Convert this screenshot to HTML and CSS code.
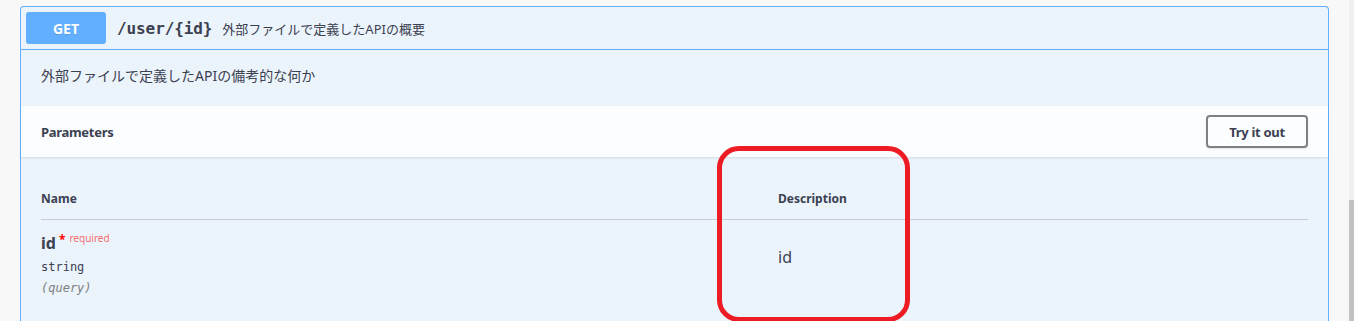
FILE: index.html
```html
<!DOCTYPE html>
<html lang="ja">
<head>
<meta charset="utf-8">
<title>GET /user/{id}</title>
<link rel="stylesheet" href="styles.css">
</head>
<body>
<div class="page">
  <div class="main">
    <div class="opblock">
      <div class="summary">
        <span class="method">GET</span>
        <span class="path">/user/{id}</span>
        <span class="summary-text">外部ファイルで定義したAPIの概要</span>
      </div>
      <div class="description">外部ファイルで定義したAPIの備考的な何か</div>
      <div class="section-header">
        <h4 class="section-title">Parameters</h4>
        <button class="try-btn">Try it out</button>
      </div>
      <div class="table-container">
        <div class="params">
          <div class="th">Name</div>
          <div class="th">Description</div>
          <div class="cell-name">
            <div class="param-name">id<span class="star">*</span><span class="req">required</span></div>
            <div class="param-type">string</div>
            <div class="param-in">(query)</div>
          </div>
          <div class="cell-desc">id</div>
        </div>
      </div>
    </div>
    <div class="highlight"></div>
  </div>
  <div class="scrollbar"><div class="thumb"></div></div>
</div>
</body>
</html>
```

FILE: styles.css
```css
html, body {
  margin: 0;
  padding: 0;
  height: 100%;
  overflow: hidden;
}
body {
  background: #f8f8f8;
  font-family: "Noto Sans", "Noto Sans CJK JP", sans-serif;
  color: #3b4151;
}
.page {
  display: flex;
  height: 321px;
  overflow: hidden;
}
.main {
  flex: 1;
  position: relative;
  padding: 6px 20px 0 20px;
}
.opblock {
  background: #ebf3fb;
  border: 1px solid #61affe;
  border-bottom: none;
  border-radius: 4px 4px 0 0;
  height: 400px;
}
.summary {
  display: flex;
  align-items: center;
  padding: 5px;
  border-bottom: 1px solid #61affe;
  height: 32px;
}
.method {
  width: 80px;
  height: 32px;
  background: #61affe;
  color: #fff;
  border-radius: 3px;
  font-weight: 700;
  font-size: 14px;
  display: flex;
  align-items: center;
  justify-content: center;
  text-shadow: 0 1px 0 rgba(0,0,0,.1);
}
.path {
  font-family: "DejaVu Sans Mono", monospace;
  font-size: 16px;
  font-weight: 600;
  margin-left: 11px;
  letter-spacing: -0.1px;
}
.summary-text {
  font-size: 13px;
  margin-left: 10px;
}
.description {
  height: 56px;
  box-sizing: border-box;
  padding: 16px 20px 0;
  font-size: 14px;
  line-height: 20px;
}
.section-header {
  display: flex;
  align-items: center;
  justify-content: space-between;
  height: 51px;
  padding: 0 20px;
  background: rgba(255,255,255,.8);
  box-shadow: 0 1px 2px rgba(0,0,0,.1);
}
.section-title {
  margin: 0;
  font-size: 13px;
  font-weight: 700;
  letter-spacing: -0.3px;
}
.try-btn {
  width: 102px;
  height: 33px;
  background: transparent;
  border: 2px solid #808080;
  border-radius: 4px;
  font-family: "Noto Sans", sans-serif;
  font-size: 13px;
  font-weight: 700;
  letter-spacing: -0.3px;
  color: #3b4151;
  box-shadow: 0 1px 2px rgba(0,0,0,.1);
  padding: 0;
}
.table-container {
  padding: 29px 20px 0 20px;
}
.params {
  display: grid;
  grid-template-columns: 737px 1fr;
}
.th {
  font-size: 12px;
  font-weight: 700;
  padding: 4px 0 12px;
  border-bottom: 1px solid #c8ccd3;
}
.cell-name {
  padding-top: 13px;
}
.param-name {
  font-size: 16px;
  font-weight: 700;
  line-height: 20px;
}
.star {
  color: red;
  font-size: 12px;
  position: relative;
  top: -5px;
  margin-left: 3px;
}
.req {
  color: rgba(255,0,0,.6);
  font-size: 10px;
  font-weight: 400;
  position: relative;
  top: -7px;
  margin-left: 4px;
}
.param-type {
  font-family: "DejaVu Sans Mono", monospace;
  font-size: 12px;
  margin-top: 5px;
  line-height: 14px;
}
.param-in {
  font-family: "DejaVu Sans Mono", monospace;
  font-size: 12px;
  font-style: italic;
  color: #808080;
  margin-top: 7px;
  line-height: 14px;
}
.cell-desc {
  font-size: 16px;
  font-weight: 400;
  padding-top: 26px;
  color: #3b4151;
}
.highlight {
  position: absolute;
  left: 717px;
  top: 146px;
  width: 183px;
  height: 166px;
  border: 5px solid #ed1c24;
  border-radius: 22px;
}
.scrollbar {
  width: 5px;
  background: #f0f0f0;
  display: flex;
  padding-top: 200px;
  box-sizing: border-box;
}
.thumb {
  width: 5px;
  background: #c1c1c1;
  height: 121px;
}
```
